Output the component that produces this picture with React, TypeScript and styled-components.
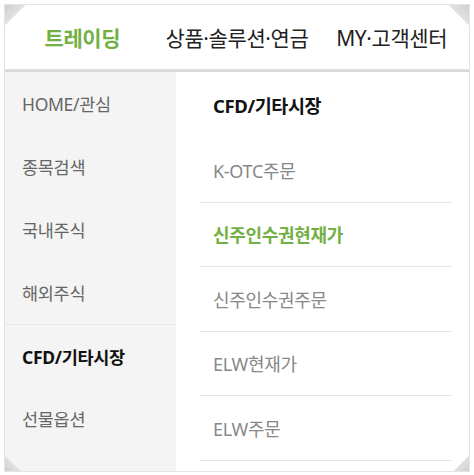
import React from 'react';
import styled, { createGlobalStyle } from 'styled-components';

const GlobalStyle = createGlobalStyle`
  html, body {
    margin: 0;
    padding: 0;
    background: #fff;
  }
  body {
    font-family: "Noto Sans", "Noto Sans CJK KR", sans-serif;
  }
`;

const topMenus = ['트레이딩', '상품·솔루션·연금', 'MY·고객센터'];
const sideMenus = ['HOME/관심', '종목검색', '국내주식', '해외주식', 'CFD/기타시장', '선물옵션'];
const subMenus = ['K-OTC주문', '신주인수권현재가', '신주인수권주문', 'ELW현재가', 'ELW주문'];

const App: React.FC = () => {
  return (
    <>
      <GlobalStyle />
      <Frame>
        <Corner $pos="tl" />
        <Corner $pos="tr" />
        <Corner $pos="bl" />
        <Corner $pos="br" />
        <TopNav>
          {topMenus.map((m, i) => (
            <TopTab key={m} $active={i === 0}>{m}</TopTab>
          ))}
        </TopNav>
        <Band />
        <Body>
          <SideList>
            {sideMenus.map((m) => (
              <SideItem key={m} $active={m === 'CFD/기타시장'}>{m}</SideItem>
            ))}
          </SideList>
          <SubPanel>
            <SubTitle>CFD/기타시장</SubTitle>
            {subMenus.map((m) => (
              <SubItem key={m} $active={m === '신주인수권현재가'}>{m}</SubItem>
            ))}
          </SubPanel>
        </Body>
      </Frame>
    </>
  );
};

export default App;

// Styled components
const Frame = styled.div`
  position: relative;
  width: 464px;
  height: 466px;
  margin: 4px 0 0 4px;
  border: 1px solid #e4e4e4;
  overflow: hidden;
  display: flex;
  flex-direction: column;
`;

const cornerBg: Record<string, string> = {
  tl: 'linear-gradient(135deg, #cfcfcf 0%, #e2e2e2 49%, transparent 50%)',
  tr: 'linear-gradient(225deg, #cfcfcf 0%, #e2e2e2 49%, transparent 50%)',
  bl: 'linear-gradient(45deg, #cfcfcf 0%, #e2e2e2 49%, transparent 50%)',
  br: 'linear-gradient(315deg, #cfcfcf 0%, #e2e2e2 49%, transparent 50%)',
};

const Corner = styled.div<{ $pos: 'tl' | 'tr' | 'bl' | 'br' }>`
  position: absolute;
  z-index: 2;
  width: ${(p) => (p.$pos[0] === 't' ? 21 : 16)}px;
  height: ${(p) => (p.$pos[0] === 't' ? 20 : 16)}px;
  ${(p) => (p.$pos[0] === 't' ? 'top: 0;' : 'bottom: 0;')}
  ${(p) => (p.$pos[1] === 'l' ? 'left: 0;' : 'right: 0;')}
  background: ${(p) => cornerBg[p.$pos]};
`;

const TopNav = styled.div`
  display: grid;
  grid-template-columns: repeat(3, 1fr);
  height: 63px;
  background: #fff;
`;

const TopTab = styled.div<{ $active?: boolean }>`
  display: flex;
  align-items: center;
  justify-content: center;
  font-size: 21px;
  letter-spacing: -0.4px;
  color: ${(p) => (p.$active ? '#72b043' : '#222')};
  font-weight: ${(p) => (p.$active ? 700 : 400)};
`;

const Band = styled.div`
  height: 3px;
  margin-top: 1px;
  background: linear-gradient(#e2e2e2, #d6d6d6);
`;

const Body = styled.div`
  flex: 1;
  display: flex;
  min-height: 0;
`;

const SideList = styled.div`
  width: 171px;
  background: #f4f4f4;
  display: flex;
  flex-direction: column;
`;

const SideItem = styled.div<{ $active?: boolean }>`
  height: 63px;
  flex-shrink: 0;
  display: flex;
  align-items: center;
  padding-left: 17px;
  box-sizing: border-box;
  font-size: 17.5px;
  letter-spacing: -0.3px;
  color: ${(p) => (p.$active ? '#111' : '#666')};
  font-weight: ${(p) => (p.$active ? 700 : 400)};
  ${(p) => (p.$active ? 'border-top: 1px solid #e9e9e9;' : '')}
`;

const SubPanel = styled.div`
  flex: 1;
  background: #fff;
  padding: 0 17px 0 24px;
  display: flex;
  flex-direction: column;
`;

const SubTitle = styled.div`
  height: 66px;
  flex-shrink: 0;
  display: flex;
  align-items: center;
  padding-left: 13px;
  font-size: 18.5px;
  font-weight: 700;
  color: #111;
  letter-spacing: -0.4px;
`;

const SubItem = styled.div<{ $active?: boolean }>`
  height: 64.5px;
  flex-shrink: 0;
  box-sizing: border-box;
  display: flex;
  align-items: center;
  padding-left: 13px;
  border-bottom: 1px solid #e4e4e4;
  font-size: 18px;
  letter-spacing: -0.3px;
  color: ${(p) => (p.$active ? '#72b043' : '#888')};
  font-weight: ${(p) => (p.$active ? 700 : 400)};
`;
